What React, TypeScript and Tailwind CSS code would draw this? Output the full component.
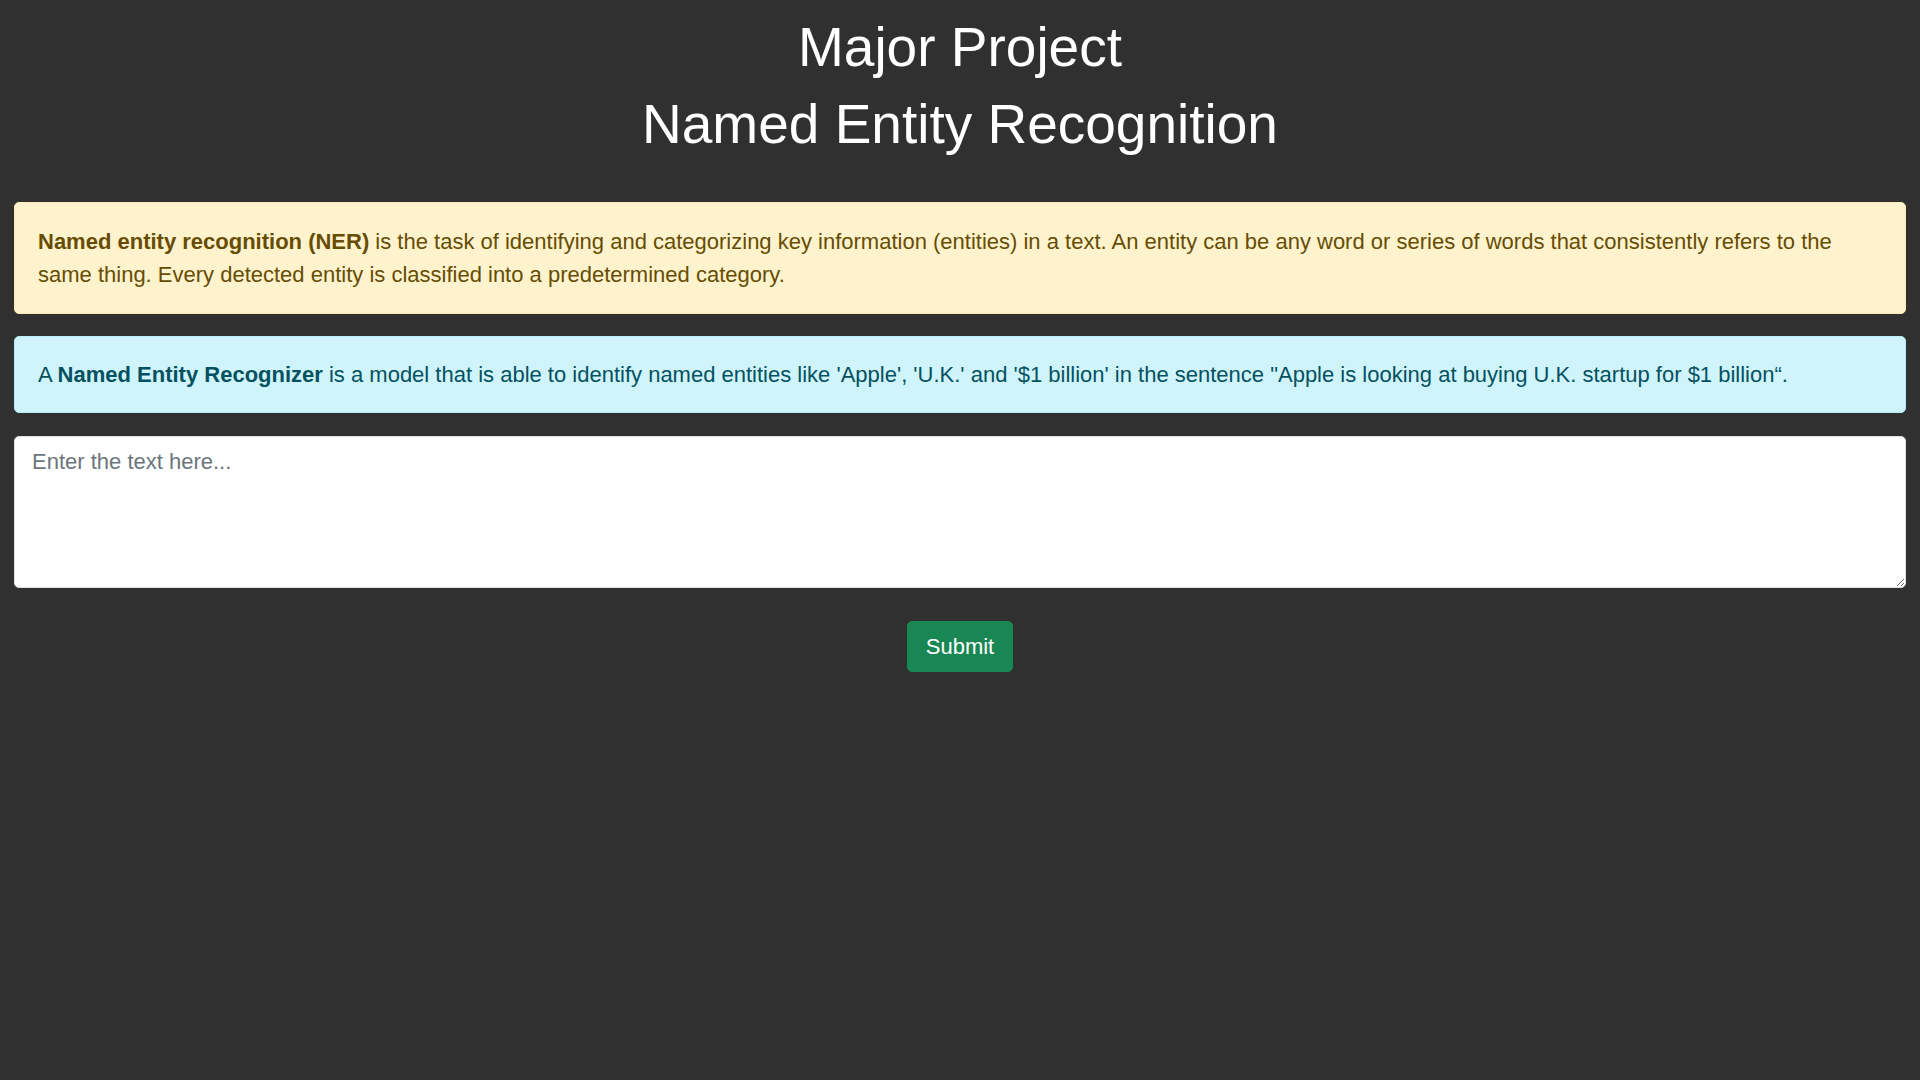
export default function App() {
  return (
    <div className="min-h-screen bg-[#303030] px-[14px] pt-[14px] font-['Liberation_Sans',Arial,sans-serif]">
      <header className="text-center text-white">
        <h1 className="mb-[11px] text-[55px] leading-[66px] font-normal">Major Project</h1>
        <h1 className="mb-[11px] text-[55px] leading-[66px] font-normal">Named Entity Recognition</h1>
      </header>

      <div className="mt-[45px] rounded-[5px] border border-[#ffecb5] bg-[#fff3cd] px-[23px] py-[22px] text-[22px] leading-[33px] text-[#664d03]">
        <b>Named entity recognition (NER)</b> is the task of identifying and categorizing key
        information (entities) in a text. An entity can be any word or series of words that
        consistently refers to the same thing. Every detected entity is classified into a
        predetermined category.
      </div>

      <div className="mt-[22px] rounded-[5px] border border-[#b6effb] bg-[#cff4fc] px-[23px] py-[21px] text-[22px] leading-[33px] text-[#055160]">
        A <b>Named Entity Recognizer</b> is a model that is able to identify named entities like
        'Apple', 'U.K.' and '$1 billion' in the sentence "Apple is looking at buying U.K. startup
        for $1 billion“.
      </div>

      <form className="mt-[23px] flex flex-col items-center" onSubmit={(e) => e.preventDefault()}>
        <textarea
          placeholder="Enter the text here..."
          className="block h-[152px] w-full rounded-[5px] border border-[#dee2e6] bg-white px-[17px] py-[8px] text-[22px] leading-[33px] text-[#212529] outline-none placeholder:text-[#6c757d]"
        />
        <button
          type="submit"
          className="mt-[33px] h-[51px] rounded-[5px] border border-[#198754] bg-[#198754] px-[18px] text-[22px] leading-[33px] text-white"
        >
          Submit
        </button>
      </form>
    </div>
  )
}
